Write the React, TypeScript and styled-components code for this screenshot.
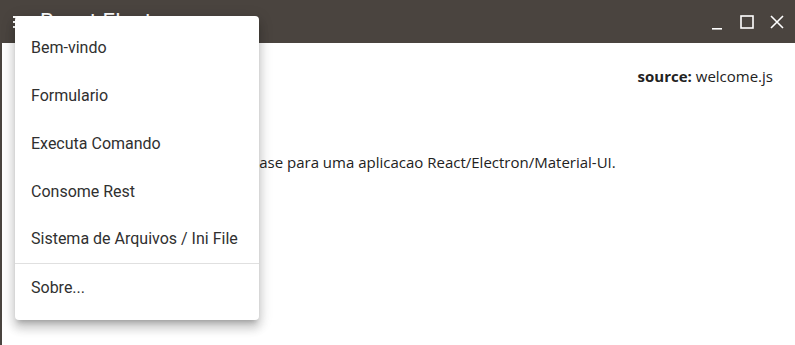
import React from "react";
import styled, { createGlobalStyle } from "styled-components";

const GlobalStyle = createGlobalStyle`
  html, body {
    margin: 0;
    padding: 0;
    background: #ffffff;
  }
  body {
    font-family: "Open Sans", "DejaVu Sans", sans-serif;
  }
`;

const Window = styled.div`
  position: relative;
  width: 795px;
  height: 345px;
  display: flex;
  flex-direction: column;
  overflow: hidden;
`;

const TitleBar = styled.div`
  height: 43px;
  flex-shrink: 0;
  background: #4a443f;
  display: flex;
  align-items: center;
  padding: 0 10px 0 8px;
  color: #ffffff;
`;

const MenuButton = styled.div`
  width: 24px;
  display: flex;
  align-items: center;
  justify-content: center;
  margin-right: 8px;
`;

const Title = styled.div`
  flex: 1;
  font-family: "Roboto", "Liberation Sans", sans-serif;
  font-size: 22px;
  font-weight: 400;
  letter-spacing: 0.2px;
`;

const Controls = styled.div`
  display: flex;
  align-items: center;
  gap: 14px;
`;

const ControlButton = styled.div`
  width: 16px;
  height: 16px;
  display: flex;
  align-items: center;
  justify-content: center;
`;

const Content = styled.div`
  flex: 1;
  border-left: 2px solid #4a443f;
  padding: 23px 22px 0 24px;
  color: #222222;
`;

const SourceLine = styled.div`
  text-align: right;
  font-size: 15px;
  line-height: 20px;

  b {
    font-weight: 700;
  }
`;

const Heading = styled.h2`
  margin: 22px 0 16px;
  font-size: 22px;
  font-weight: 400;
  line-height: 28px;
`;

const Paragraph = styled.p`
  margin: 0;
  font-size: 15px;
  line-height: 20px;
`;

const Menu = styled.ul`
  position: absolute;
  left: 15px;
  top: 16px;
  width: 244px;
  margin: 0;
  padding: 8px 0;
  list-style: none;
  background: #ffffff;
  border-radius: 4px;
  box-shadow: 0px 5px 5px -3px rgba(0, 0, 0, 0.2),
    0px 8px 10px 1px rgba(0, 0, 0, 0.14), 0px 3px 14px 2px rgba(0, 0, 0, 0.12);
`;

const MenuItem = styled.li<{ $divider?: boolean }>`
  height: 48px;
  box-sizing: border-box;
  display: flex;
  align-items: center;
  padding: 0 16px 2px;
  font-family: "Roboto", "Liberation Sans", sans-serif;
  font-size: 16px;
  color: #303030;
  border-bottom: ${(p) => (p.$divider ? "1px solid rgba(0, 0, 0, 0.12)" : "none")};
`;

const items = [
  "Bem-vindo",
  "Formulario",
  "Executa Comando",
  "Consome Rest",
  "Sistema de Arquivos / Ini File",
];

export default function App() {
  return (
    <Window>
      <GlobalStyle />
      <TitleBar>
        <MenuButton>
          <svg width="14" height="12" viewBox="0 0 14 12">
            <rect x="0" y="0" width="14" height="2" fill="#fff" />
            <rect x="0" y="5" width="14" height="2" fill="#fff" />
            <rect x="0" y="10" width="14" height="2" fill="#fff" />
          </svg>
        </MenuButton>
        <Title>React Electron</Title>
        <Controls>
          <ControlButton>
            <svg width="12" height="16" viewBox="0 0 12 16">
              <rect x="1" y="14" width="10" height="1.6" fill="#fff" />
            </svg>
          </ControlButton>
          <ControlButton>
            <svg width="14" height="14" viewBox="0 0 14 14">
              <rect x="1" y="1" width="12" height="12" fill="none" stroke="#fff" strokeWidth="1.6" />
            </svg>
          </ControlButton>
          <ControlButton>
            <svg width="14" height="14" viewBox="0 0 14 14">
              <path d="M1 1 L13 13 M13 1 L1 13" stroke="#fff" strokeWidth="1.6" />
            </svg>
          </ControlButton>
        </Controls>
      </TitleBar>
      <Content>
        <SourceLine>
          <b>source:</b> welcome.js
        </SourceLine>
        <Heading>Bem-vindo</Heading>
        <Paragraph>
          Este e um modelo de esqueleto base para uma aplicacao React/Electron/Material-UI.
        </Paragraph>
      </Content>
      <Menu>
        {items.map((label, i) => (
          <MenuItem key={label} $divider={i === items.length - 1}>
            {label}
          </MenuItem>
        ))}
        <MenuItem>Sobre...</MenuItem>
      </Menu>
    </Window>
  );
}
